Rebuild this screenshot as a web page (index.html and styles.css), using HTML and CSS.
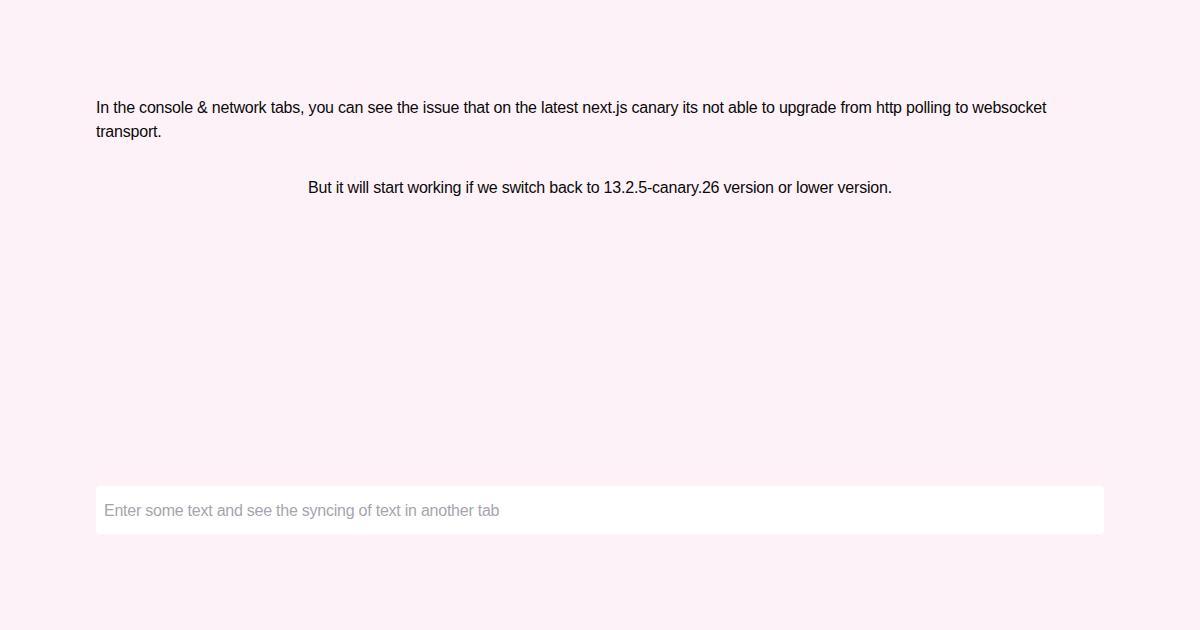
FILE: index.html
```html
<!DOCTYPE html>
<html lang="en">
<head>
<meta charset="utf-8">
<title>Socket sync</title>
<link rel="stylesheet" href="styles.css">
</head>
<body>
<main class="page">
  <div class="notes">
    <p class="note">In the console &amp; network tabs, you can see the issue that on the latest next.js canary its not able to upgrade from http polling to websocket transport.</p>
    <p class="note note-center">But it will start working if we switch back to 13.2.5-canary.26 version or lower version.</p>
  </div>
  <input class="sync-input" type="text" placeholder="Enter some text and see the syncing of text in another tab">
</main>
</body>
</html>
```
FILE: styles.css
```css
* { box-sizing: border-box; }
html, body { margin: 0; padding: 0; }
body {
  background: #fdf2f8;
  color: #0a0a0a;
  font-family: "Liberation Sans", Arial, sans-serif;
  font-size: 16px;
  letter-spacing: -0.2px;
  line-height: 24px;
}
.page {
  min-height: 630px;
  display: flex;
  flex-direction: column;
  justify-content: space-between;
  padding: 96px;
}
.notes {
  display: flex;
  flex-direction: column;
  gap: 32px;
}
.note { margin: 0; }
.note-center { text-align: center; }
.sync-input {
  display: block;
  width: 100%;
  height: 48px;
  border: none;
  border-radius: 4px;
  background: #fff;
  padding: 1px 8px 0;
  font-family: "Liberation Sans", Arial, sans-serif;
  font-size: 16px;
  letter-spacing: -0.24px;
  color: #0a0a0a;
  outline: none;
}
.sync-input::placeholder { color: #a8a4ad; }
```
